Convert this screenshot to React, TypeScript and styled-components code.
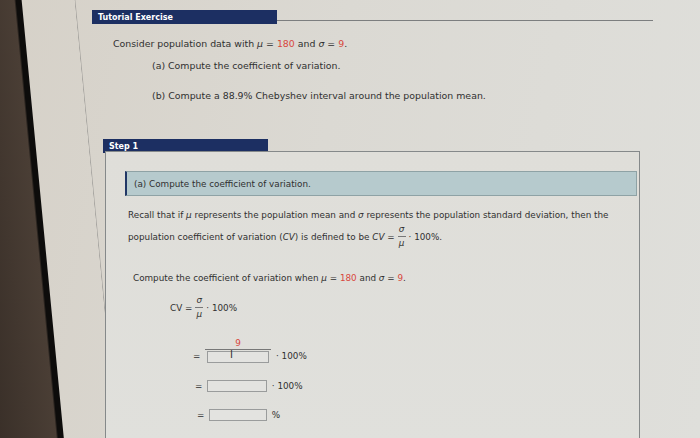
import styled, { createGlobalStyle } from "styled-components";

const GlobalStyle = createGlobalStyle`
  html, body {
    margin: 0;
    padding: 0;
    background: #d9d7d1;
  }
  body {
    font-family: "DejaVu Sans", Verdana, sans-serif;
    overflow: hidden;
  }
`;

const Screen = styled.div`
  width: 700px;
  height: 438px;
  box-sizing: border-box;
  padding: 10px 0 0 92px;
  overflow: hidden;
  color: #303030;
  font-size: 8.8px;
  background:
    linear-gradient(84.5deg, #3a3029 0, #4a3e35 56px, #0d0c0b 58px, #0d0c0b 63px, transparent 64px),
    linear-gradient(84.5deg, transparent 116px, rgba(110, 110, 110, 0.45) 116.5px, transparent 117.5px),
    linear-gradient(100deg, #d6d1c8 0%, #dbd9d3 45%, #dfdfdb 100%);
`;

const TitleRow = styled.div`
  display: flex;
  align-items: flex-end;
  width: 561px;
`;

const Tab = styled.div<{ $w: number }>`
  width: ${(p) => p.$w}px;
  height: 14px;
  box-sizing: border-box;
  padding: 0 6px;
  display: flex;
  align-items: center;
  background: #1c2f62;
  color: #fff;
  font-size: 8px;
  font-weight: bold;
`;

const Rule = styled.div`
  flex: 1;
  height: 1px;
  margin-bottom: 3px;
  background: #7c7e7f;
`;

const Intro = styled.div`
  font-size: 9.4px;
`;

const Line = styled.div<{ $indent?: number; $top?: number }>`
  margin-left: ${(p) => p.$indent ?? 0}px;
  margin-top: ${(p) => p.$top ?? 0}px;
  line-height: 12px;
  white-space: nowrap;
`;

const Red = styled.span`
  color: #d8473d;
`;

const Sym = styled.i`
  font-style: italic;
`;

const StepHead = styled.div`
  margin: 37px 0 0 11px;
`;

const StepBox = styled.div`
  margin: -2px 0 0 13px;
  width: 535px;
  height: 300px;
  box-sizing: border-box;
  border: 1px solid #85898a;
  border-bottom: none;
  padding: 19px 0 0 19px;
  background: linear-gradient(180deg, #dfded9 0%, #e0e0dc 100%);
`;

const PartBar = styled.div`
  width: 512px;
  height: 25px;
  box-sizing: border-box;
  border: 1px solid #8ea2a5;
  border-left: 2px solid #213766;
  background: #b6cacd;
  padding-left: 7px;
  display: flex;
  align-items: center;
`;

const FracLine = styled.div<{ $indent: number; $top: number }>`
  display: flex;
  align-items: center;
  margin: ${(p) => p.$top}px 0 0 ${(p) => p.$indent}px;
  white-space: nowrap;
  line-height: 12px;
`;

const Frac = styled.span`
  display: inline-flex;
  flex-direction: column;
  align-items: center;
  margin: 0 3px;
  line-height: 11px;
`;

const Bar = styled.span<{ $w: number }>`
  width: ${(p) => p.$w}px;
  height: 1px;
  background: #777;
  margin: 1px 0;
`;

const Eq = styled.span`
  width: 12px;
`;

const Input = styled.div<{ $w: number }>`
  width: ${(p) => p.$w}px;
  height: 12px;
  box-sizing: border-box;
  border: 1px solid #9a9c9c;
  background: #e3e3e0;
  position: relative;
`;

const Cursor = styled.span`
  position: absolute;
  left: 22px;
  top: -3px;
  font-size: 10px;
  line-height: 12px;
  color: #333;
`;

const Row = styled.div<{ $indent: number; $top: number }>`
  display: flex;
  align-items: center;
  margin: ${(p) => p.$top}px 0 0 ${(p) => p.$indent}px;
  white-space: nowrap;
`;

const Stack = styled.div`
  display: flex;
  flex-direction: column;
  align-items: center;
  margin-right: 3px;
`;

const Tail = styled.span`
  margin-left: 2px;
`;

export default function App() {
  return (
    <>
      <GlobalStyle />
      <Screen>
        <TitleRow>
          <Tab $w={185}>Tutorial Exercise</Tab>
          <Rule />
        </TitleRow>

        <Intro>
          <Line $indent={21} $top={14}>
            Consider population data with <Sym>μ</Sym> = <Red>180</Red> and <Sym>σ</Sym> = <Red>9</Red>.
          </Line>
          <Line $indent={60} $top={10}>
            (a) Compute the coefficient of variation.
          </Line>
          <Line $indent={60} $top={18}>
            (b) Compute a 88.9% Chebyshev interval around the population mean.
          </Line>
        </Intro>

        <StepHead>
          <Tab $w={165}>Step 1</Tab>
        </StepHead>
        <StepBox>
          <PartBar>(a) Compute the coefficient of variation.</PartBar>
          <Line $indent={3} $top={13}>
            Recall that if <Sym>μ</Sym> represents the population mean and <Sym>σ</Sym> represents the
            population standard deviation, then the
          </Line>
          <FracLine $indent={3} $top={3}>
            population coefficient of variation (<Sym>CV</Sym>) is defined to be&nbsp;<Sym>CV</Sym>&nbsp;=
            <Frac>
              <Sym>σ</Sym>
              <Bar $w={8} />
              <Sym>μ</Sym>
            </Frac>
            · 100%.
          </FracLine>
          <Line $indent={8} $top={23}>
            Compute the coefficient of variation when <Sym>μ</Sym> = <Red>180</Red> and <Sym>σ</Sym> ={" "}
            <Red>9</Red>.
          </Line>
          <FracLine $indent={45} $top={11}>
            CV =
            <Frac>
              <Sym>σ</Sym>
              <Bar $w={8} />
              <Sym>μ</Sym>
            </Frac>
            · 100%
          </FracLine>

          <Row $indent={68} $top={28}>
            <Eq>=</Eq>
            <Stack style={{ marginTop: -10 }}>
              <Red style={{ lineHeight: "10px" }}>9</Red>
              <Bar $w={66} />
              <Input $w={62}>
                <Cursor>I</Cursor>
              </Input>
            </Stack>
            <Tail>· 100%</Tail>
          </Row>
          <Row $indent={70} $top={17}>
            <Eq>=</Eq>
            <Input $w={60} />
            <Tail>&nbsp;· 100%</Tail>
          </Row>
          <Row $indent={72} $top={17}>
            <Eq>=</Eq>
            <Input $w={58} />
            <Tail>&nbsp;%</Tail>
          </Row>
        </StepBox>
      </Screen>
    </>
  );
}
